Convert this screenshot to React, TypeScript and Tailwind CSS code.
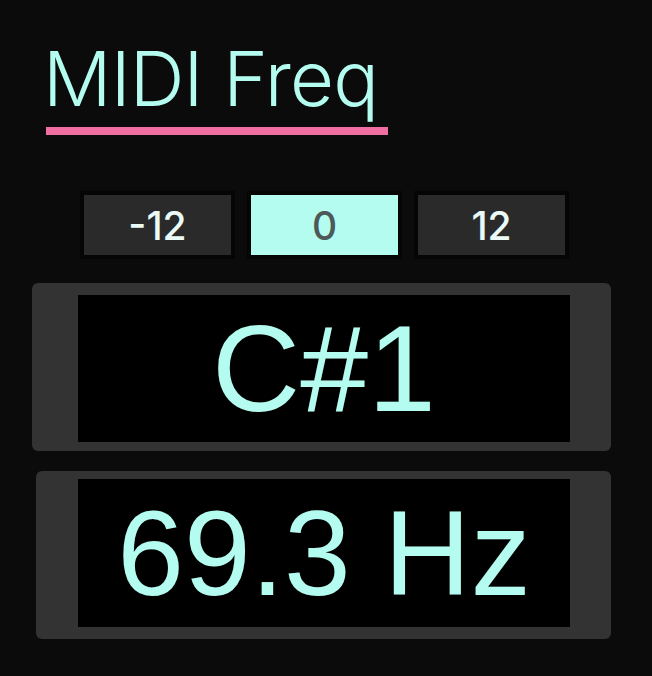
import React from "react";

const cyan = "text-[#b4fcf0]";

function StepButton({ label, active }: { label: string; active?: boolean }) {
  return (
    <div
      className={
        "flex h-[68px] w-[155px] items-center justify-center border-4 border-[#050505] font-['Inter'] text-[39px] font-medium leading-none " +
        (active ? "bg-[#b4fcf0] text-[#4d5957]" : "bg-[#2a2a2a] text-[#eafbf7]")
      }
    >
      {label}
    </div>
  );
}

export default function App() {
  return (
    <div className="flex h-[676px] w-[652px] flex-col bg-[#0b0b0b]">
      <div
        className={`ml-[43px] mt-[40px] h-[76px] font-['Inter'] text-[76px] font-light leading-none tracking-[-0.8px] ${cyan}`}
      >
        MIDI Freq
      </div>
      <div className="ml-[46px] mt-[11px] h-[8px] w-[342px] bg-[#f06ea2]" />

      <div className="ml-[80px] mt-[56px] flex gap-[12px]">
        <StepButton label="-12" />
        <StepButton label="0" active />
        <StepButton label="12" />
      </div>

      <div className="ml-[32px] mt-[24px] flex h-[168px] w-[579px] rounded-[6px] bg-[#333333] pb-[9px] pl-[46px] pr-[41px] pt-[12px]">
        <div
          className={`flex flex-1 items-center justify-center bg-black font-['Liberation_Sans'] text-[122px] leading-none ${cyan}`}
        >
          C#1
        </div>
      </div>

      <div className="ml-[36px] mt-[20px] flex h-[168px] w-[575px] rounded-[6px] bg-[#333333] pb-[12px] pl-[42px] pr-[41px] pt-[8px]">
        <div
          className={`flex flex-1 items-center justify-center bg-black font-['Liberation_Sans'] text-[120px] leading-none ${cyan}`}
        >
          69.3 Hz
        </div>
      </div>
    </div>
  );
}
